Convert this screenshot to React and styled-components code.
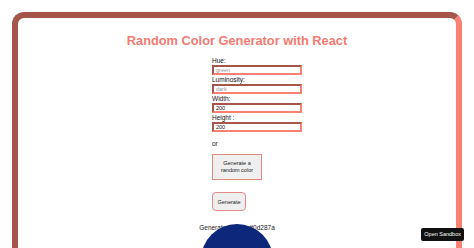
import React from "react";
import styled, { createGlobalStyle } from "styled-components";

const GlobalStyle = createGlobalStyle`
    html, body {
        margin: 0;
        padding: 0;
        background: #ffffff;
        overflow: hidden;
    }
    body {
        font-family: "Liberation Sans", Arial, sans-serif;
        color: #222;
    }
`;

const Page = styled.div`
    position: relative;
    width: 474px;
    height: 248px;
    overflow: hidden;
    padding: 12px 12px 0 12px;
    box-sizing: border-box;
`;

const Frame = styled.div`
    border: 6px inset #fa8072;
    border-radius: 12px;
    height: 320px;
    box-sizing: border-box;
    padding-top: 15px;
`;

const Title = styled.h1`
    margin: 0;
    text-align: center;
    font-size: 12.8px;
    font-weight: bold;
    color: #f37b72;
    line-height: 16px;
`;

const Form = styled.div`
    display: flex;
    flex-direction: column;
    align-items: flex-start;
    margin: 8px 0 0 194px;
`;

const Label = styled.label`
    font-size: 6.5px;
    line-height: 8px;
    color: #111;
`;

const Field = styled.input`
    width: 90px;
    height: 10px;
    box-sizing: border-box;
    border: 2px inset #fa8072;
    padding: 0 2px;
    margin: 0 0 1px 0;
    font-size: 5.5px;
    font-family: "Liberation Sans", Arial, sans-serif;
    color: #111;
    outline: none;
    &::placeholder {
        color: #999;
    }
`;

const Or = styled.p`
    font-size: 6.5px;
    margin: 7px 0 0 0;
    line-height: 8px;
`;

const RandomButton = styled.button`
    width: 50px;
    height: 26px;
    margin-top: 6px;
    border: 1px solid #e08a80;
    border-radius: 0;
    background: #efefef;
    font-size: 5.5px;
    line-height: 7px;
    color: #222;
    padding: 0 5px;
    font-family: "Liberation Sans", Arial, sans-serif;
`;

const GenerateButton = styled.button`
    width: 34px;
    height: 19px;
    margin-top: 12px;
    border: 1px solid #e08a8a;
    border-radius: 4px;
    background: #efefef;
    font-size: 5.5px;
    color: #222;
    padding: 0;
    font-family: "Liberation Sans", Arial, sans-serif;
`;

const Result = styled.div`
    position: relative;
    margin-top: 12px;
    text-align: center;
`;

const ResultText = styled.p`
    margin: 0;
    font-size: 6.5px;
    line-height: 9px;
    color: #222;
`;

const Swatch = styled.div`
    position: absolute;
    left: 50%;
    top: 1px;
    width: 72px;
    height: 72px;
    margin-left: -36px;
    border-radius: 50%;
    background: ${(props) => props.$color};
`;

const SandboxButton = styled.div`
    position: absolute;
    right: 10px;
    bottom: 7px;
    background: #111;
    color: #fff;
    font-size: 5.5px;
    line-height: 13px;
    padding: 0 3px;
    border-radius: 2px;
`;

function App() {
    const color = "#0d287a";

    return (
        <Page>
            <GlobalStyle />
            <Frame>
                <Title>Random Color Generator with React</Title>
                <Form>
                    <Label>Hue:</Label>
                    <Field placeholder="green" />
                    <Label>Luminosity:</Label>
                    <Field placeholder="dark" />
                    <Label>Width:</Label>
                    <Field defaultValue="200" />
                    <Label>Height :</Label>
                    <Field defaultValue="200" />
                    <Or>or</Or>
                    <RandomButton>Generate a random color</RandomButton>
                    <GenerateButton>Generate</GenerateButton>
                </Form>
                <Result>
                    <ResultText>Generated color: {color}</ResultText>
                    <Swatch $color={color} />
                </Result>
            </Frame>
            <SandboxButton>Open Sandbox</SandboxButton>
        </Page>
    );
}

export default App;
